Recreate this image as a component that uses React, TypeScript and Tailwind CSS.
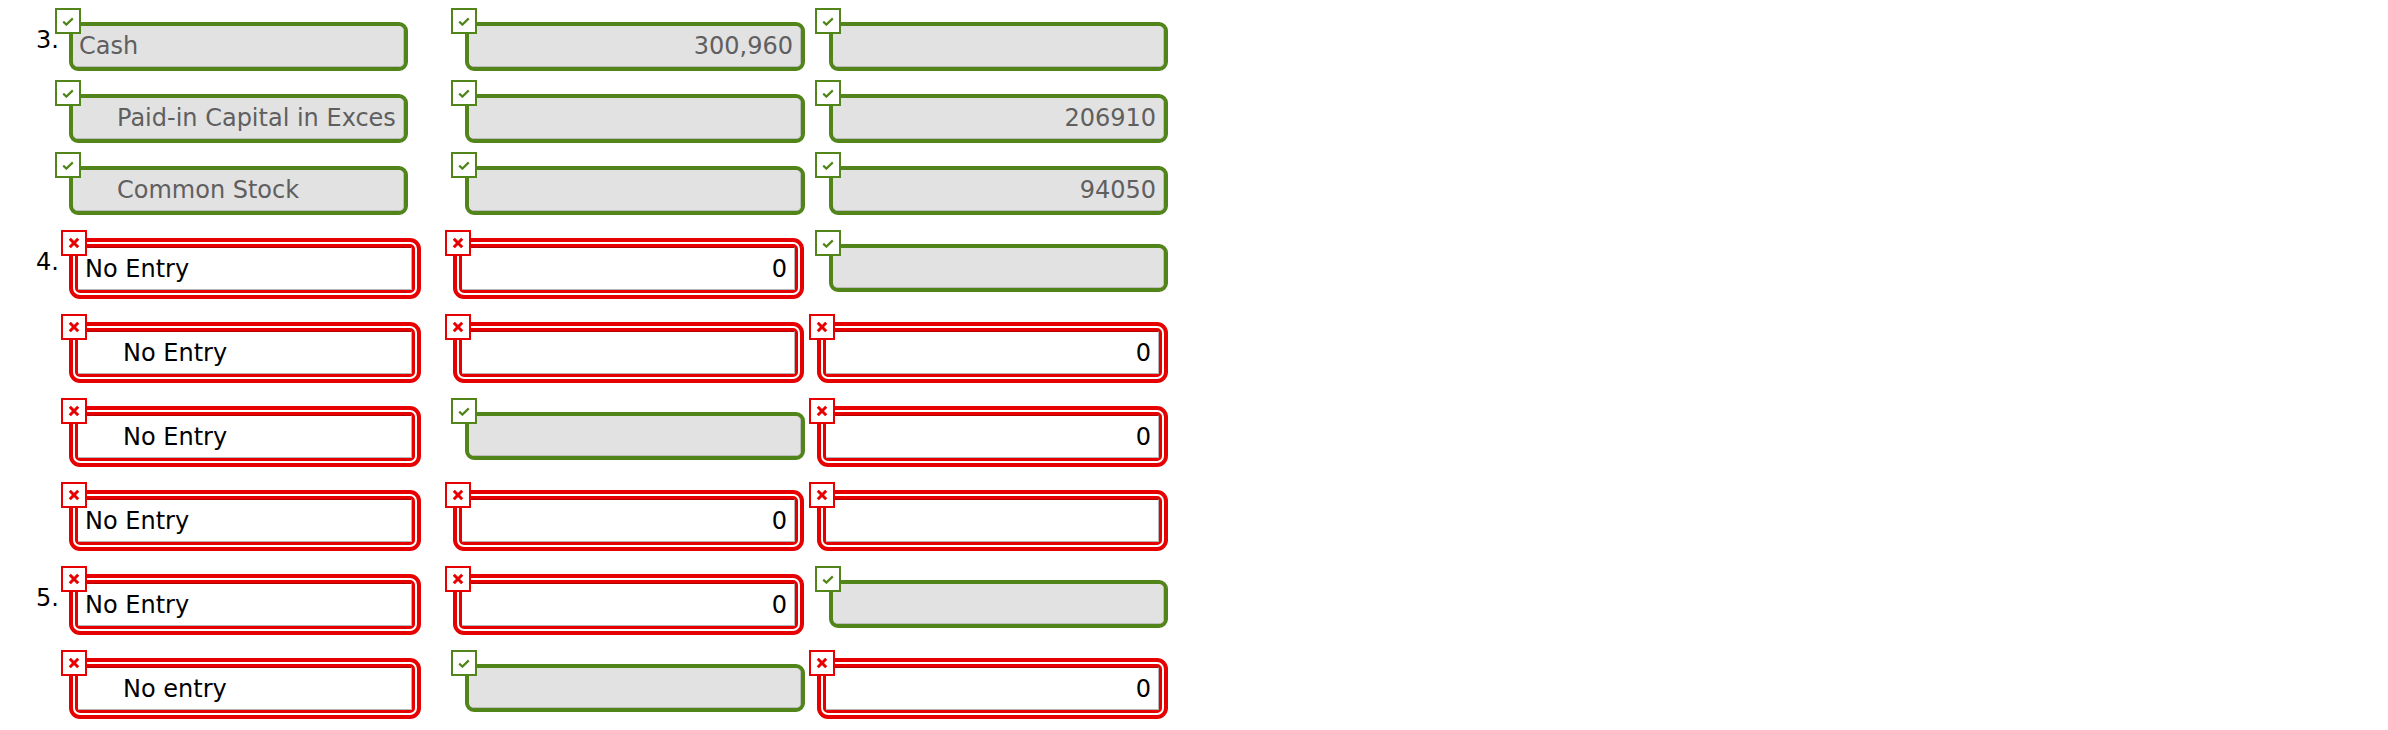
import React from 'react';

type Kind = 'ok' | 'bad';
type Cell = { kind: Kind; text?: string; indent?: boolean };
type Row = { label?: string; cells: [Cell, Cell, Cell] };

const GREEN = 'border-[#518419]';
const RED = 'border-[#e60000]';

// per column: cell width, badge offset and box offset/width for each state
const COLS = [
  {
    cell: 'w-[385px]',
    align: 'left',
    ok: { badge: 'left-0', box: 'ml-[14px] w-[339px]' },
    bad: { badge: 'left-[6px]', box: 'ml-[14px] w-[352px]' },
  },
  {
    cell: 'w-[365px]',
    align: 'right',
    ok: { badge: 'left-[11px]', box: 'ml-[25px] w-[340px]' },
    bad: { badge: 'left-[5px]', box: 'ml-[13px] w-[351px]' },
  },
  {
    cell: 'w-[370px]',
    align: 'right',
    ok: { badge: 'left-[10px]', box: 'ml-[24px] w-[339px]' },
    bad: { badge: 'left-[4px]', box: 'ml-[12px] w-[351px]' },
  },
] as const;

const top: Row[] = [
  { label: '3.', cells: [{ kind: 'ok', text: 'Cash' }, { kind: 'ok', text: '300,960' }, { kind: 'ok' }] },
  { cells: [{ kind: 'ok', text: 'Paid-in Capital in Exces', indent: true }, { kind: 'ok' }, { kind: 'ok', text: '206910' }] },
  { cells: [{ kind: 'ok', text: 'Common Stock', indent: true }, { kind: 'ok' }, { kind: 'ok', text: '94050' }] },
];

const bottom: Row[] = [
  { label: '4.', cells: [{ kind: 'bad', text: 'No Entry' }, { kind: 'bad', text: '0' }, { kind: 'ok' }] },
  { cells: [{ kind: 'bad', text: 'No Entry', indent: true }, { kind: 'bad' }, { kind: 'bad', text: '0' }] },
  { cells: [{ kind: 'bad', text: 'No Entry', indent: true }, { kind: 'ok' }, { kind: 'bad', text: '0' }] },
  { cells: [{ kind: 'bad', text: 'No Entry' }, { kind: 'bad', text: '0' }, { kind: 'bad' }] },
  { label: '5.', cells: [{ kind: 'bad', text: 'No Entry' }, { kind: 'bad', text: '0' }, { kind: 'ok' }] },
  { cells: [{ kind: 'bad', text: 'No entry', indent: true }, { kind: 'ok' }, { kind: 'bad', text: '0' }] },
];

function CheckBadge() {
  return (
    <div className={`w-[26px] h-[26px] border-2 ${GREEN} bg-white flex items-center justify-center`}>
      <svg width="12" height="9" viewBox="0 0 12 9">
        <polyline points="1.2,4.6 4.4,7.6 10.8,1.4" fill="none" stroke="#518419" strokeWidth="2.2" />
      </svg>
    </div>
  );
}

function CrossBadge() {
  return (
    <div className={`w-[26px] h-[26px] border-2 ${RED} bg-white flex items-center justify-center`}>
      <svg width="12" height="12" viewBox="0 0 12 12">
        <path d="M1.8 1.8 L10.2 10.2 M10.2 1.8 L1.8 10.2" stroke="#e60000" strokeWidth="3" />
      </svg>
    </div>
  );
}

function Field({ cell, col, tall }: { cell: Cell; col: number; tall: boolean }) {
  const c = COLS[col];
  const right = c.align === 'right';
  if (cell.kind === 'ok') {
    const pad = right ? 'justify-end pr-[7px]' : cell.indent ? 'pl-[44px]' : 'pl-[6px]';
    return (
      <div className={`relative ${c.cell} shrink-0 pt-[14px]`}>
        <div className={`absolute top-0 ${c.ok.badge} z-10`}>
          <CheckBadge />
        </div>
        <div className={`${c.ok.box} ${tall ? 'h-[48px]' : 'h-[49px]'} border-4 ${GREEN} rounded-[9px] bg-[#e2e2e2] overflow-hidden`}>
          <div className={`h-full flex items-center ${pad} border-b border-r border-[#bcbcbc] rounded-[4px] text-[#5f5f5f] whitespace-nowrap overflow-hidden`}>
            {cell.text}
          </div>
        </div>
      </div>
    );
  }
  const pad = right ? 'justify-end pr-[7px]' : cell.indent ? 'pl-[45px]' : 'pl-[7px]';
  return (
    <div className={`relative ${c.cell} shrink-0 pt-[8px]`}>
      <div className={`absolute top-0 ${c.bad.badge} z-10`}>
        <CrossBadge />
      </div>
      <div className={`${c.bad.box} h-[61px] border-4 ${RED} rounded-[11px] p-[2px] bg-white`}>
        <div className={`h-full border-[3px] ${RED} rounded-[5px] bg-white`}>
          <div className={`h-full flex items-center ${pad} border-t border-t-[#b30000] border-b border-r border-b-[#b5b5b5] border-r-[#b5b5b5] text-black whitespace-nowrap overflow-hidden`}>
            {cell.text}
          </div>
        </div>
      </div>
    </div>
  );
}

function EntryRow({ row, tall }: { row: Row; tall: boolean }) {
  return (
    <div className={`flex ${tall ? 'h-[84px]' : 'h-[72px]'}`}>
      <div className="w-[55px] shrink-0 pl-[36px] pt-[18px] leading-[28px] text-black whitespace-nowrap">
        {row.label}
      </div>
      {row.cells.map((cell, i) => (
        <Field key={i} cell={cell} col={i} tall={tall} />
      ))}
    </div>
  );
}

export default function App() {
  return (
    <div className="w-[2388px] h-[730px] overflow-hidden bg-white pt-[8px] font-['DejaVu_Sans',sans-serif] text-[24px]">
      {top.map((row, i) => (
        <EntryRow key={`t${i}`} row={row} tall={false} />
      ))}
      <div className="mt-[6px]">
        {bottom.map((row, i) => (
          <EntryRow key={`b${i}`} row={row} tall={true} />
        ))}
      </div>
    </div>
  );
}
